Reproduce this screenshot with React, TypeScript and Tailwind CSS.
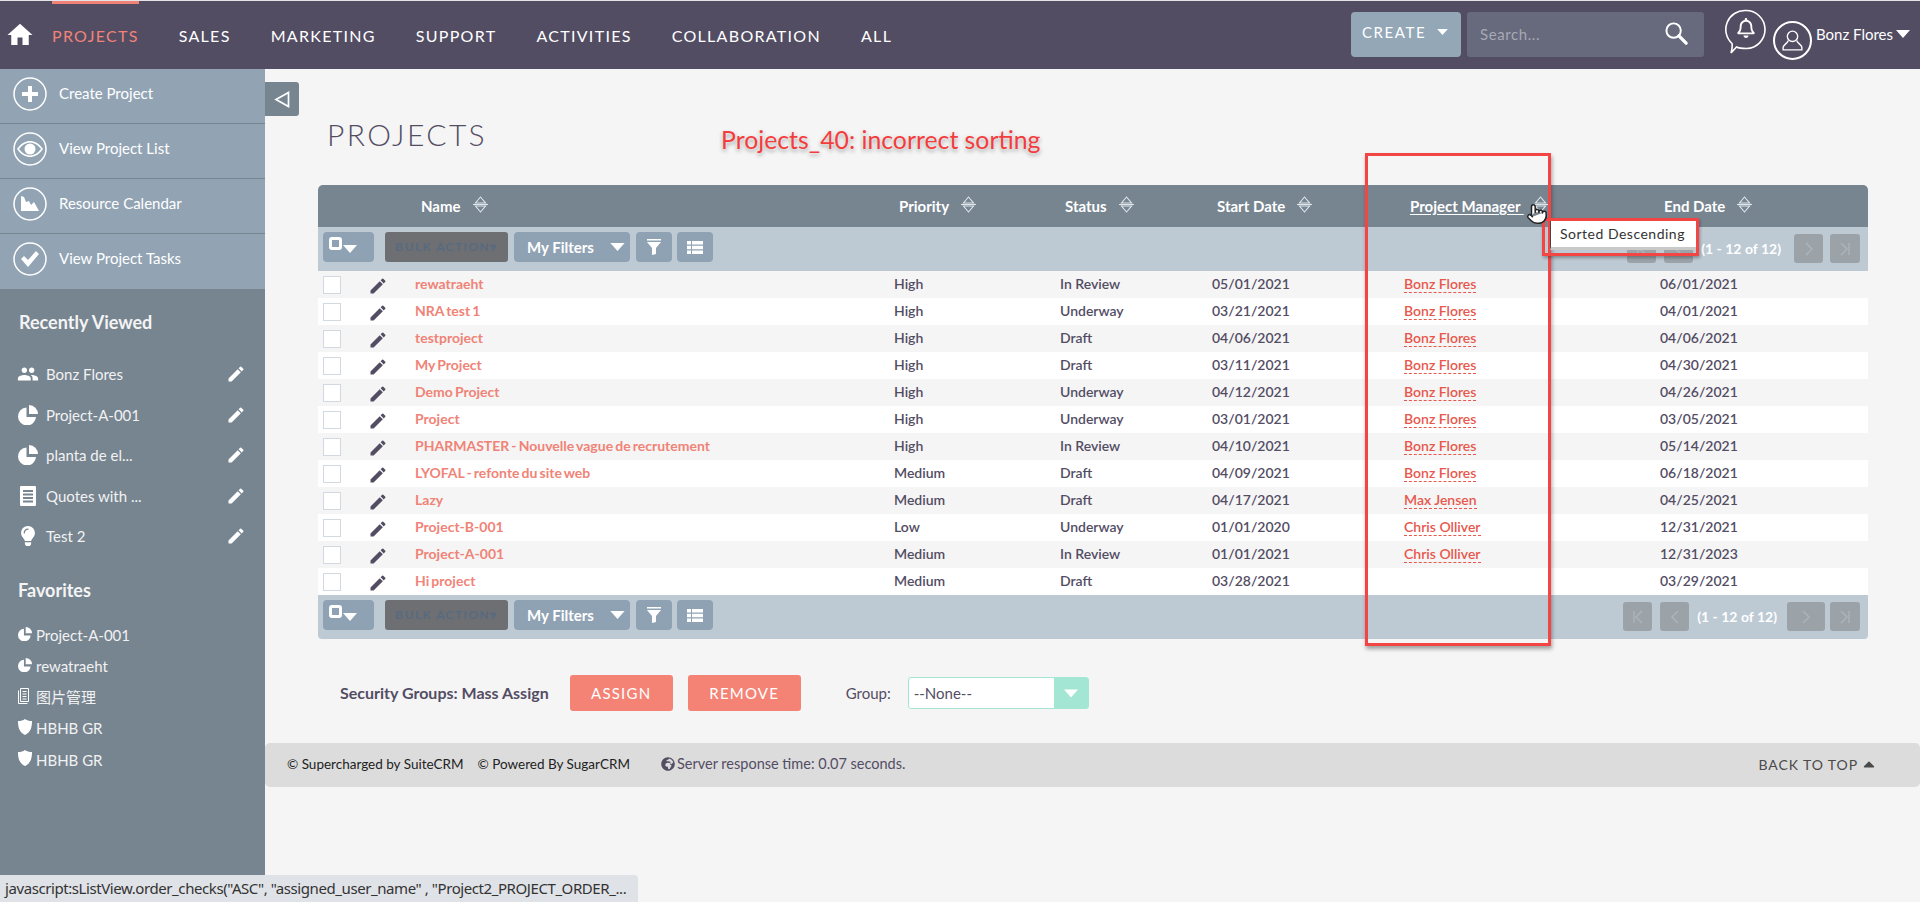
import React from "react";
import { MdEdit, MdPeople, MdHome } from "react-icons/md";
import { FaLightbulb, FaRegBell, FaGlobeAfrica, FaCaretUp } from "react-icons/fa";
import { Pointer } from "lucide-react";

const rows = [
  ["rewatraeht", "High", "In Review", "05/01/2021", "Bonz Flores", "06/01/2021"],
  ["NRA test 1", "High", "Underway", "03/21/2021", "Bonz Flores", "04/01/2021"],
  ["testproject", "High", "Draft", "04/06/2021", "Bonz Flores", "04/06/2021"],
  ["My Project", "High", "Draft", "03/11/2021", "Bonz Flores", "04/30/2021"],
  ["Demo Project", "High", "Underway", "04/12/2021", "Bonz Flores", "04/26/2021"],
  ["Project", "High", "Underway", "03/01/2021", "Bonz Flores", "03/05/2021"],
  ["PHARMASTER - Nouvelle vague de recrutement", "High", "In Review", "04/10/2021", "Bonz Flores", "05/14/2021"],
  ["LYOFAL - refonte du site web", "Medium", "Draft", "04/09/2021", "Bonz Flores", "06/18/2021"],
  ["Lazy", "Medium", "Draft", "04/17/2021", "Max Jensen", "04/25/2021"],
  ["Project-B-001", "Low", "Underway", "01/01/2020", "Chris Olliver", "12/31/2021"],
  ["Project-A-001", "Medium", "In Review", "01/01/2021", "Chris Olliver", "12/31/2023"],
  ["Hi project", "Medium", "Draft", "03/28/2021", "", "03/29/2021"],
];

const Caret = ({ className }: { className: string }) => (
  <svg viewBox="0 0 16 9" className={className} fill="currentColor"><path d="M0 0h16L8 9z" /></svg>
);

const Sort = () => (
  <svg viewBox="0 0 16 18" className="w-[15px] h-[17px] ml-[12px] -mt-[3px]" fill="none" stroke="#dfe5ea" strokeWidth="1.1">
    <path d="M2.5 7.5 8 1l5.500 6.500zM2.500 10.500 8 17l5.500-6.500zM0 9h16" />
  </svg>
);

const Ring = ({ children }: { children: React.ReactNode }) => (
  <svg viewBox="0 0 34 34" className="w-[34px] h-[34px] shrink-0" fill="#fff">
    <circle cx="17" cy="17" r="16" fill="none" stroke="#fff" strokeWidth="1.500" />
    {children}
  </svg>
);

const actions: [string, React.ReactNode][] = [
  ["Create Project", <path key="a" d="M15 9h4v6h6v4h-6v6h-4v-6H9v-4h6z" />],
  ["View Project List", <g key="b"><path d="M4 17c4-6 9-8 13-8s9 2 13 8c-4 6-9 8-13 8S8 23 4 17zm2 0c3.500 4.500 7.500 6.500 11 6.500S24.500 21.500 28 17c-3.500-4.500-7.500-6.500-11-6.500S9.500 12.500 6 17z" /><circle cx="17" cy="17" r="5.500" /></g>],
  ["Resource Calendar", <path key="c" d="M8 9l3 1 2 5 3-1 2 4 3-3 5 9H8z" />],
  ["View Project Tasks", <path key="d" d="M8 17l3-3 4 4 8-9 3 3-11 13z" />],
];

const Pie = ({ className }: { className: string }) => (
  <svg viewBox="0 0 20 20" className={className} fill="#fff">
    <path d="M8.500 2.500v9.500h9.500A9 9 0 1 1 8.500 2.500z" />
    <path d="M11 0a9 9 0 0 1 9 9h-9z" />
  </svg>
);

const Doc = () => (
  <svg viewBox="0 0 16 20" className="w-4 h-5 ml-[2px] mr-[2px]" fill="#fff">
    <path fillRule="evenodd" d="M1 0h14a1 1 0 0 1 1 1v18a1 1 0 0 1-1 1H1a1 1 0 0 1-1-1V1a1 1 0 0 1 1-1zm2 4v2h10V4zm0 3.500v2h10v-2zm0 3.500v2h10v-2zm0 3.500v2h10v-2z" />
  </svg>
);

const recent: [React.ReactNode, string][] = [
  [<MdPeople key="p" className="w-[22px] h-[22px] -ml-[1px] text-white" />, "Bonz Flores"],
  [<Pie key="a" className="w-5 h-5" />, "Project-A-001"],
  [<Pie key="b" className="w-5 h-5" />, "planta de el..."],
  [<Doc key="q" />, "Quotes with ..."],
  [<FaLightbulb key="l" className="w-5 h-5 text-white" />, "Test 2"],
];

const Shield = () => (
  <svg viewBox="0 0 14 16" className="w-[14px] h-4 shrink-0 -mt-[3px]" fill="#fff"><path d="M7 0c2 1.500 4 2 7 2 0 6-1 11-7 14C1 13 0 8 0 2c3 0 5-.5 7-2z" /></svg>
);
const SmallDoc = () => (
  <svg viewBox="0 0 14 16" className="w-[14px] h-4 shrink-0 -mt-[3px]" fill="none" stroke="#fff" strokeWidth="1"><path d="M2.500.5h8v13h-8zM.5 2.500v13h9M4.500 3.500h4M4.500 6h4M4.500 8.500h4M4.500 11h4" /></svg>
);
const favorites: [React.ReactNode, string][] = [
  [<Pie key="a" className="w-[14px] h-[14px] shrink-0 -mt-[3px]" />, "Project-A-001"],
  [<Pie key="b" className="w-[14px] h-[14px] shrink-0 -mt-[3px]" />, "rewatraeht"],
  [<SmallDoc key="c" />, "图片管理"],
  [<Shield key="d" />, "HBHB GR"],
  [<Shield key="e" />, "HBHB GR"],
];

const PageBtn = ({ w, d }: { w: string; d: string }) => (
  <span className={`${w} h-[29px] bg-[#9ba3a9] rounded-[3px] flex items-center justify-center`}>
    <svg viewBox="0 0 14 16" className="w-[14px] h-4" fill="none" stroke="#aab4bd" strokeWidth="1.500"><path d={d} /></svg>
  </span>
);

const ActionBar = ({ top }: { top: boolean }) => (
  <div className={`h-[44px] bg-[#bdc9d3] flex items-start pt-[5px] pl-[5px] pr-[8px] ${top ? "" : "rounded-b-[4px]"}`}>
    <span className="w-[51px] h-[30px] bg-[#8fa2b3] rounded-[4px] flex items-start pl-[6px] pt-[5px] gap-[1px] text-white">
      <span className="w-[13px] h-[13px] border-[3px] border-white rounded-[3px]" />
      <Caret className="w-[14px] h-[8px] mt-[8px]" />
    </span>
    <span className="ml-[11px] w-[123px] h-[30px] bg-[#6d6f73] rounded-[3px] flex items-center justify-center text-[#586a7f] text-[12px] font-bold tracking-[1.4px]">BULK ACTION▾</span>
    <span className="ml-[6px] w-[116px] h-[30px] bg-[#8fa2b3] rounded-[4px] flex items-center pl-[13px] text-white text-[15px] font-bold">
      My Filters
      <Caret className="w-[15px] h-[8px] ml-[16px]" />
    </span>
    <span className="ml-[6px] w-[36px] h-[30px] bg-[#8fa2b3] rounded-[4px] flex items-center justify-center">
      <svg viewBox="0 0 14 16" className="w-[14px] h-[16px]" fill="#fff"><path d="M0 0h14v1.500H0zM0 3h14L9 9v6l-4 1V9z" /></svg>
    </span>
    <span className="ml-[5px] w-[36px] h-[30px] bg-[#8fa2b3] rounded-[4px] flex items-center justify-center">
      <svg viewBox="0 0 16 13" className="w-4 h-[13px]" fill="#fff"><path d="M0 0h4v3.500H0zM5 0h11v3.500H5zM0 4.700h4v3.600H0zM5 4.700h11v3.600H5zM0 9.500h4V13H0zM5 9.500h11V13H5z" /></svg>
    </span>
    <div className="ml-auto mt-[2px] flex items-center">
      <PageBtn w="w-[29px]" d="M3 2v12M11 2 5 8l6 6" />
      <span className="ml-[8px]"><PageBtn w="w-[29px]" d="M10 2 4 8l6 6" /></span>
      <span className={`ml-[8px] ${top ? "mr-[13px]" : "mr-[10px]"} text-white text-[14px] font-bold whitespace-nowrap`}>(1 - 12 of 12)</span>
      <PageBtn w={top ? "w-[29px]" : "w-[38px]"} d="M4 2l6 6-6 6" />
      <span className={top ? "ml-[7px]" : "ml-[5px]"}><PageBtn w="w-[30px]" d="M11 2v12M3 2l6 6-6 6" /></span>
    </div>
  </div>
);

const gridCols = "grid grid-cols-[97px_479px_166px_152px_192px_256px_1fr]";

export default function App() {
  return (
    <div className="relative w-[1920px] h-[902px] overflow-hidden bg-[#f5f5f5] font-['Lato',sans-serif] text-[#534d64]">
      <div className="h-px bg-[#e4e4e8]" />
      <header className="h-[68px] bg-[#534d64] flex items-start relative">
        <MdHome className="w-[30px] h-[30px] text-white ml-[5px] mt-[19px] shrink-0" />
        <nav className="ml-[17px] flex gap-[40px] text-[16px] tracking-[1.3px] h-full">
          {["PROJECTS", "SALES", "MARKETING", "SUPPORT", "ACTIVITIES", "COLLABORATION", "ALL"].map((n, i) => (
            <span key={n} className={`h-full flex items-center border-t-[3px] pb-[1px] ${i === 0 ? "border-[#f08377] text-[#f08377]" : "border-transparent text-white"}`}>{n}</span>
          ))}
        </nav>
        <div className="ml-auto flex items-start pt-[11px]">
          <span className="w-[110px] h-[45px] bg-[#94a7b7] rounded-[4px] flex items-center pl-[11px] pb-[5px] text-[15px] tracking-[1.6px] text-white">
            CREATE
            <Caret className="w-[11px] h-[6px] ml-[11px]" />
          </span>
          <div className="ml-[6px] w-[237px] h-[45px] bg-[#676a7c] rounded-[3px] flex items-center pl-[13px] text-[15px] tracking-[0.6px] text-[#a5a9b5]">
            Search...
            <svg viewBox="0 0 26 26" className="w-[25px] h-[25px] ml-auto mr-[15px] mb-[3px]" fill="none" stroke="#fff"><circle cx="10" cy="10" r="7.500" strokeWidth="2" /><path d="M15.500 15.500 23 23" strokeWidth="3.500" strokeLinecap="round" /></svg>
          </div>
          <div className="relative ml-[21px] w-[41px] h-[46px] -mt-[3px]">
            <svg viewBox="0 0 41 46" className="absolute inset-0 w-[41px] h-[46px]" fill="none" stroke="#fff" strokeWidth="1.600"><path d="M20.500 1.500a19 19 0 0 1 1 38c-4 0-8-.5-10-1.500L6 44c1-3 1.500-6 1-9.500A19 19 0 0 1 20.500 1.500z" /></svg>
            <FaRegBell className="absolute left-[12px] top-[9px] w-[18px] h-[20px] text-white" />
          </div>
          <div className="ml-[7px] w-[39px] h-[39px] mt-[9px] rounded-full border-2 border-white flex items-center justify-center shrink-0">
            <svg viewBox="0 0 24 24" className="w-[25px] h-[25px]" fill="none" stroke="#fff" strokeWidth="1.300"><circle cx="12" cy="8" r="5" /><path d="M8 12c-1 3-5 4-5 7v2h18v-2c0-3-4-4-5-7" /></svg>
          </div>
          <span className="ml-[4px] mt-[11px] text-white text-[15px] whitespace-nowrap">Bonz Flores</span>
          <Caret className="w-[14px] h-[8px] mt-[18px] ml-[3px] mr-[10px] text-white" />
        </div>
      </header>

      <div className="flex h-[833px]">
        <aside className="w-[265px] shrink-0 bg-[#778591] text-white">
          <div>
            {actions.map(([t, ic], i) => (
              <div key={t} className={`h-[55px] bg-[#92a4b4] flex items-center pl-[13px] gap-[12px] text-[15px] ${i < 3 ? "border-b border-[#778591] pb-[4px]" : "pb-[5px]"}`}>
                <Ring>{ic}</Ring>
                <span className="-mt-px">{t}</span>
              </div>
            ))}
          </div>
          <h3 className="ml-[19px] mt-[21px] text-[18px] font-bold leading-[24px] text-[#f4f4f4]">Recently Viewed</h3>
          <ul className="mt-[20px]">
            {recent.map(([ic, t]) => (
              <li key={t} className="h-[40.5px] flex items-center pl-[18px] text-[15px] text-[#f2f2f2]">
                <span className="w-[28px] flex shrink-0">{ic}</span>
                <span>{t}</span>
                <MdEdit className="ml-auto mr-[19px] w-[20px] h-[20px] text-white" />
              </li>
            ))}
          </ul>
          <h3 className="ml-[18px] mt-[21px] text-[18px] font-bold leading-[24px] text-[#f4f4f4]">Favorites</h3>
          <ul className="mt-[18px]">
            {favorites.map(([ic, t]) => (
              <li key={t + String((ic as React.ReactElement).key)} className="h-[31.2px] flex items-center pl-[18px] gap-[4px] text-[15px] text-[#f2f2f2] font-['Lato','Noto_Sans_CJK_SC',sans-serif]">
                {ic}
                <span>{t}</span>
              </li>
            ))}
          </ul>
        </aside>

        <main className="relative flex-1 min-w-0">
          <div className="absolute left-0 top-[13px] w-[34px] h-[34px] bg-[#778591] rounded-r-[3px] flex items-center justify-center">
            <svg viewBox="0 0 16 17" className="w-4 h-[17px]" fill="none" stroke="#fff" strokeWidth="1.700"><path d="M14.500 1.500v14L2 8.500z" /></svg>
          </div>
          <h1 className="ml-[62px] mt-[47px] h-[37px] text-[30px] leading-[37px] font-light tracking-[2.4px] text-[#534d64]">PROJECTS</h1>
          <section className="ml-[53px] mr-[52px] mt-[32px]">
            <div className={`${gridCols} h-[42px] bg-[#778591] rounded-t-[5px] text-white text-[15px] font-bold items-center`}>
              <span />
              <span className="pl-[6px] flex items-center">Name<Sort /></span>
              <span className="pl-[5px] flex items-center">Priority<Sort /></span>
              <span className="pl-[5px] flex items-center">Status<Sort /></span>
              <span className="pl-[5px] flex items-center">Start Date<Sort /></span>
              <span className="pl-[6px] flex items-center"><span className="underline underline-offset-2 pr-[9px] whitespace-pre">Project Manager </span><span className="-ml-[12px] flex"><Sort /></span></span>
              <span className="pl-[4px] flex items-center">End Date<Sort /></span>
            </div>
            <ActionBar top />
            {rows.map((r, i) => (
              <div key={r[0]} className={`${gridCols} h-[27px] items-center pb-[2px] text-[14px] font-semibold text-[#534d64] ${i % 2 ? "bg-white" : "bg-[#f5f5f5]"}`}>
                <span className="flex items-center pl-[5px] pt-[2px]">
                  <span className="w-[18px] h-[18px] bg-white border border-[#d3d9e0]" />
                  <MdEdit className="ml-[27px] w-[20px] h-[20px] text-[#534d64] mt-[3px]" />
                </span>
                <span className="text-[#f08377] font-bold whitespace-nowrap [word-spacing:-1.3px]">{r[0]}</span>
                <span>{r[1]}</span>
                <span>{r[2]}</span>
                <span>{r[3]}</span>
                <span>{r[4] && <span className="text-[#e8574c] border-b border-dashed border-[#e8574c]">{r[4]}</span>}</span>
                <span>{r[5]}</span>
              </div>
            ))}
            <ActionBar top={false} />
          </section>

          <div className="mt-[36px] flex items-center h-[36px] pl-[75px]">
            <span className="text-[16px] font-bold">Security Groups: Mass Assign</span>
            <span className="ml-[21px] w-[103px] h-[36px] bg-[#f48376] rounded-[3px] flex items-center justify-center text-white text-[15px] tracking-[1.200px]">ASSIGN</span>
            <span className="ml-[15px] w-[113px] h-[36px] bg-[#f48376] rounded-[3px] flex items-center justify-center text-white text-[15px] tracking-[1.200px]">REMOVE</span>
            <span className="ml-[45px] text-[15px]">Group:</span>
            <div className="ml-[17px] w-[181px] h-[32px] bg-white border border-[#a2e6d3] rounded-[3px] flex items-center pl-[5px] text-[15px]">
              --None--
              <span className="ml-auto w-[34px] h-full bg-[#a2e6d3] flex items-center justify-center">
                <Caret className="w-[14px] h-[9px] text-white" />
              </span>
            </div>
          </div>

          <footer className="mt-[32px] h-[44px] bg-[#dcdcdc] rounded-[5px] flex items-center pl-[22px] pr-[42px] pb-[2px] text-[13.500px] whitespace-nowrap">
            <span className="text-[#222]">© Supercharged by SuiteCRM</span>
            <span className="ml-[14px] text-[#222]">© Powered By SugarCRM</span>
            <span className="ml-[31px] flex items-center gap-[2px] text-[14.500px]"><FaGlobeAfrica className="w-[14px] h-[14px]" />Server response time: 0.07 seconds.</span>
            <span className="ml-auto flex items-center gap-[2px] text-[14px] tracking-[0.900px] text-[#4a4a4a]">BACK TO TOP<FaCaretUp className="w-[18px] h-[18px]" /></span>
          </footer>
        </main>
      </div>

      <div className="absolute left-0 bottom-0 w-[638px] h-[27px] bg-[#dfe2e7] rounded-tr-[4px] flex items-center pl-[5px] text-[15px] text-[#333] whitespace-nowrap font-['Noto_Sans',sans-serif] tracking-[-0.42px]">
        javascript:sListView.order_checks("ASC", "assigned_user_name" , "Project2_PROJECT_ORDER_...
      </div>

      <div className="absolute left-[721px] top-[125px] h-[30px] text-[#f33c3c] text-[24.800px] leading-[30px] whitespace-nowrap [text-shadow:0_0_3px_#fff,0_2px_4px_#888]">Projects_40: incorrect sorting</div>

      <div className="absolute left-[1365px] top-[153px] w-[186px] h-[493px] border-[3px] border-[#f44545] shadow-[1px_3px_4px_rgba(0,0,0,0.35)]" />
      <div className="absolute left-[1550px] top-[220px] w-[146px] h-[30px] bg-white border-l border-[#444] border-b-[3px] border-b-[#c9c9c9] flex items-center pl-[9px] text-[14px] text-[#333] tracking-[0.5px]">Sorted Descending</div>
      <div className="absolute left-[1542px] top-[218px] w-[157px] h-[38px] border-[3px] border-[#f44545] shadow-[1px_2px_3px_rgba(0,0,0,0.3)]" />
      <Pointer className="absolute left-[1526px] top-[202px] w-[22px] h-[24px] text-[#222]" fill="#fff" strokeWidth={1.600} />
    </div>
  );
}
